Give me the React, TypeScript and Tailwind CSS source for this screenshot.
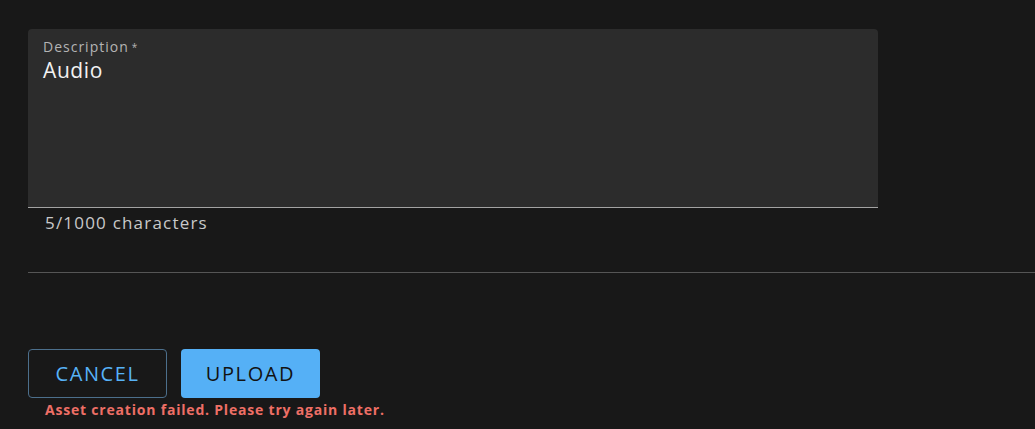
export default function App() {
  return (
    <div
      className="min-h-screen w-full bg-[#181818] pl-[28px] pt-[29px] text-white"
      style={{ fontFamily: "'Open Sans', 'Noto Sans', sans-serif" }}
    >
      <div className="w-[850px] h-[179px] rounded-t-[4px] bg-[#2c2c2c] border-b border-[#a3a3a3] px-[15px] pt-[9px]">
        <div className="text-[14px] leading-[18px] tracking-[1px] text-[#b4b4b4]">
          Description<span className="text-[10px] align-top ml-[3px]">*</span>
        </div>
        <div className="text-[21px] leading-[28px] tracking-[0.6px] text-[#f2f2f2]">Audio</div>
      </div>
      <div className="pl-[17px] pt-[4px] text-[17px] leading-[22px] tracking-[1.2px] text-[#c9c9c9]">
        5/1000 characters
      </div>
      <div className="mt-[38px] border-t border-[#555555]" />

      <div className="mt-[76px] flex gap-[14px]">
        <button className="w-[139px] h-[49px] rounded-[4px] border border-[#4c6f8c] text-[20px] tracking-[1.6px] text-[#57b2f7]">
          CANCEL
        </button>
        <button className="w-[139px] h-[49px] rounded-[4px] bg-[#55b0f6] text-[20px] tracking-[1.6px] text-[#121212]">
          UPLOAD
        </button>
      </div>
      <div className="pl-[17px] pt-[3px] text-[14px] font-bold leading-[18px] tracking-[0.8px] text-[#ee6f66]">
        Asset creation failed. Please try again later.
      </div>
    </div>
  );
}
